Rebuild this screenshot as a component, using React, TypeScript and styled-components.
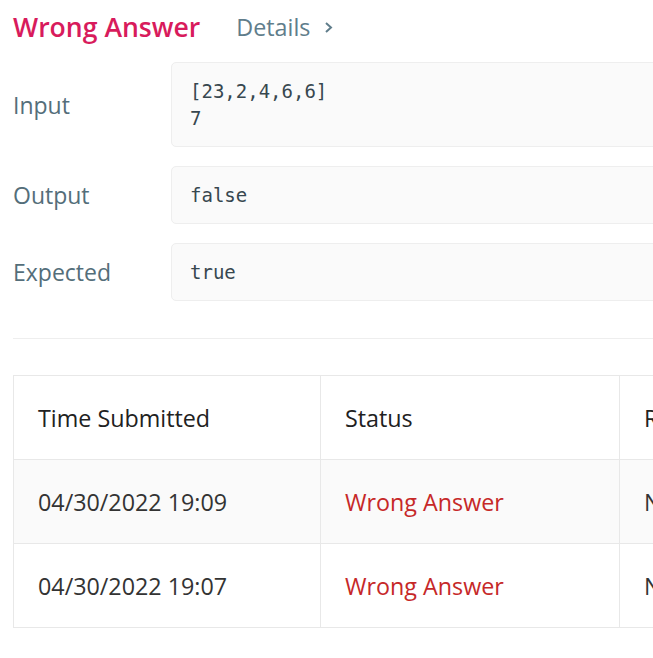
import styled, { createGlobalStyle } from "styled-components";

const GlobalStyle = createGlobalStyle`
    html, body {
        margin: 0;
        padding: 0;
        background: #fff;
        overflow: hidden;
    }
    body {
        font-family: "Open Sans", "Noto Sans", sans-serif;
    }
`;

const rows = [
    { label: "Input", lines: ["[23,2,4,6,6]", "7"] },
    { label: "Output", lines: ["false"] },
    { label: "Expected", lines: ["true"] },
];

const submissions = [
    { time: "04/30/2022 19:09", status: "Wrong Answer", runtime: "N/A" },
    { time: "04/30/2022 19:07", status: "Wrong Answer", runtime: "N/A" },
];

export default function App() {
    return (
        <>
            <GlobalStyle />
            <Page>
                <Header>
                    <Title>Wrong Answer</Title>
                    <DetailsLink>
                        Details
                        <svg width="9" height="13" viewBox="0 0 9 13">
                            <polyline
                                points="2,2 7,6.5 2,11"
                                fill="none"
                                stroke="#607d8b"
                                strokeWidth="2"
                            />
                        </svg>
                    </DetailsLink>
                </Header>

                <ResultGrid>
                    {rows.map((row) => (
                        <ResultRow key={row.label}>
                            <Label>{row.label}</Label>
                            <CodeBox>
                                {row.lines.map((line, i) => (
                                    <CodeLine key={i}>{line}</CodeLine>
                                ))}
                            </CodeBox>
                        </ResultRow>
                    ))}
                </ResultGrid>

                <Divider />

                {/* the table is wider than the window; its last column is cut off */}
                <Table>
                    <thead>
                        <tr>
                            <HeadCell $width={307}>Time Submitted</HeadCell>
                            <HeadCell $width={299}>Status</HeadCell>
                            <HeadCell>Runtime</HeadCell>
                        </tr>
                    </thead>
                    <tbody>
                        {submissions.map((s, i) => (
                            <BodyRow key={s.time} $striped={i % 2 === 0}>
                                <Cell>{s.time}</Cell>
                                <StatusCell>{s.status}</StatusCell>
                                <Cell>{s.runtime}</Cell>
                            </BodyRow>
                        ))}
                    </tbody>
                </Table>
            </Page>
        </>
    );
}

const Page = styled.div`
    width: 1000px;
    padding: 0 0 0 13px;
    box-sizing: border-box;
`;

const Header = styled.div`
    display: flex;
    align-items: center;
    gap: 36px;
    height: 54px;
`;

const Title = styled.div`
    font-size: 26.6px;
    font-weight: 600;
    color: #d81b5c;
`;

const DetailsLink = styled.div`
    display: flex;
    align-items: center;
    gap: 14px;
    font-size: 23.3px;
    color: #607d8b;
`;

const ResultGrid = styled.div`
    display: flex;
    flex-direction: column;
    gap: 19px;
    margin-top: 8px;
`;

const ResultRow = styled.div`
    display: grid;
    grid-template-columns: 158px 1fr;
    align-items: center;
`;

const Label = styled.div`
    font-size: 23px;
    color: #546e7a;
`;

const CodeBox = styled.div`
    background: #fafafa;
    border: 1px solid #eeeeee;
    border-radius: 5px;
    padding: 15px 18px 14px;
    font-family: "DejaVu Sans Mono", "Liberation Mono", monospace;
    font-size: 19px;
    line-height: 27px;
    color: #37474f;
`;

const CodeLine = styled.div`
    white-space: pre;
`;

const Divider = styled.div`
    height: 1px;
    background: #eeeeee;
    margin-top: 37px;
`;

const Table = styled.table`
    margin-top: 36px;
    border-collapse: collapse;
    width: 987px;
    border: 1px solid #e8e8e8;
    table-layout: fixed;
`;

const HeadCell = styled.th<{ $width?: number }>`
    width: ${({ $width }) => ($width ? `${$width}px` : "auto")};
    height: 84px;
    padding: 0 24px;
    text-align: left;
    font-weight: 400;
    font-size: 23.3px;
    color: #212121;
    border: 1px solid #e8e8e8;
    box-sizing: border-box;
`;

const BodyRow = styled.tr<{ $striped: boolean }>`
    background: ${({ $striped }) => ($striped ? "#fafafa" : "#fff")};
`;

const Cell = styled.td`
    height: 84px;
    padding: 0 24px;
    font-size: 23.3px;
    color: #333;
    border: 1px solid #e8e8e8;
    box-sizing: border-box;
`;

const StatusCell = styled(Cell)`
    color: #c62828;
`;
